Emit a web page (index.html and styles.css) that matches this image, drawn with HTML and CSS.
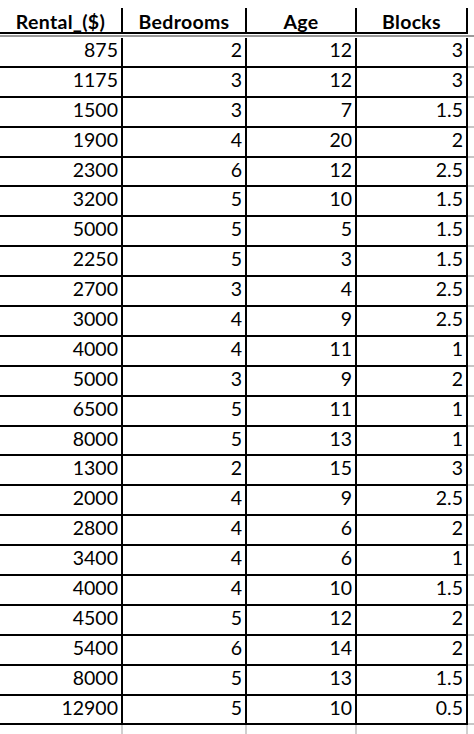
FILE: index.html
```html
<!DOCTYPE html>
<html>
<head>
<meta charset="utf-8">
<link rel="stylesheet" href="styles.css">
</head>
<body>
<div class="sheet">
  <div class="row head">
    <div class="c">Rental_($)</div><div class="c">Bedrooms</div><div class="c">Age</div><div class="c">Blocks</div><div class="x"></div>
  </div>
  <div class="double"></div>
  <div class="row"><div class="c">875</div><div class="c">2</div><div class="c">12</div><div class="c">3</div><div class="x"></div></div>
  <div class="row"><div class="c">1175</div><div class="c">3</div><div class="c">12</div><div class="c">3</div><div class="x"></div></div>
  <div class="row"><div class="c">1500</div><div class="c">3</div><div class="c">7</div><div class="c">1.5</div><div class="x"></div></div>
  <div class="row"><div class="c">1900</div><div class="c">4</div><div class="c">20</div><div class="c">2</div><div class="x"></div></div>
  <div class="row"><div class="c">2300</div><div class="c">6</div><div class="c">12</div><div class="c">2.5</div><div class="x"></div></div>
  <div class="row"><div class="c">3200</div><div class="c">5</div><div class="c">10</div><div class="c">1.5</div><div class="x"></div></div>
  <div class="row"><div class="c">5000</div><div class="c">5</div><div class="c">5</div><div class="c">1.5</div><div class="x"></div></div>
  <div class="row"><div class="c">2250</div><div class="c">5</div><div class="c">3</div><div class="c">1.5</div><div class="x"></div></div>
  <div class="row"><div class="c">2700</div><div class="c">3</div><div class="c">4</div><div class="c">2.5</div><div class="x"></div></div>
  <div class="row"><div class="c">3000</div><div class="c">4</div><div class="c">9</div><div class="c">2.5</div><div class="x"></div></div>
  <div class="row"><div class="c">4000</div><div class="c">4</div><div class="c">11</div><div class="c">1</div><div class="x"></div></div>
  <div class="row"><div class="c">5000</div><div class="c">3</div><div class="c">9</div><div class="c">2</div><div class="x"></div></div>
  <div class="row"><div class="c">6500</div><div class="c">5</div><div class="c">11</div><div class="c">1</div><div class="x"></div></div>
  <div class="row"><div class="c">8000</div><div class="c">5</div><div class="c">13</div><div class="c">1</div><div class="x"></div></div>
  <div class="row"><div class="c">1300</div><div class="c">2</div><div class="c">15</div><div class="c">3</div><div class="x"></div></div>
  <div class="row"><div class="c">2000</div><div class="c">4</div><div class="c">9</div><div class="c">2.5</div><div class="x"></div></div>
  <div class="row"><div class="c">2800</div><div class="c">4</div><div class="c">6</div><div class="c">2</div><div class="x"></div></div>
  <div class="row"><div class="c">3400</div><div class="c">4</div><div class="c">6</div><div class="c">1</div><div class="x"></div></div>
  <div class="row"><div class="c">4000</div><div class="c">4</div><div class="c">10</div><div class="c">1.5</div><div class="x"></div></div>
  <div class="row"><div class="c">4500</div><div class="c">5</div><div class="c">12</div><div class="c">2</div><div class="x"></div></div>
  <div class="row"><div class="c">5400</div><div class="c">6</div><div class="c">14</div><div class="c">2</div><div class="x"></div></div>
  <div class="row"><div class="c">8000</div><div class="c">5</div><div class="c">13</div><div class="c">1.5</div><div class="x"></div></div>
  <div class="row"><div class="c">12900</div><div class="c">5</div><div class="c">10</div><div class="c">0.5</div><div class="x"></div></div>
  <div class="row tail"><div class="c"></div><div class="c"></div><div class="c"></div><div class="c"></div><div class="x"></div></div>
</div>
</body>
</html>
```
FILE: styles.css
```css
html, body {
  margin: 0;
  padding: 0;
  background: #fff;
}
.sheet {
  width: 474px;
  font-family: Lato, "Open Sans", sans-serif;
  font-size: 19.5px;
  color: #000;
}
.row {
  display: grid;
  grid-template-columns: 123px 124px 110px 111px 6px;
}
.row .c {
  box-sizing: border-box;
  height: 29.9px;
  border-right: 2px solid #000;
  border-bottom: 2px solid #000;
  text-align: right;
  padding-right: 3px;
  line-height: 24px;
  white-space: nowrap;
}
.row .x {
  box-sizing: border-box;
  height: 29.9px;
  border-bottom: 2px solid #c6c6c6;
}
.head {
  padding-top: 8px;
}
.head .c {
  height: 24px;
  border-bottom: none;
  text-align: center;
  padding-right: 0;
  font-weight: 700;
  line-height: 28px;
  letter-spacing: 0.3px;
}
.head .x {
  height: 24px;
  border-bottom: none;
}
.double {
  height: 6px;
  background:
    linear-gradient(#000, #000) 0 0 / 468px 2px no-repeat,
    linear-gradient(#9a9a9a, #9a9a9a) 0 3px / 100% 2px no-repeat;
}
.tail .c {
  height: 10px;
  border-bottom: none;
  border-right-color: #cfcfcf;
}
.tail .x {
  height: 10px;
  border-bottom: none;
}
```
